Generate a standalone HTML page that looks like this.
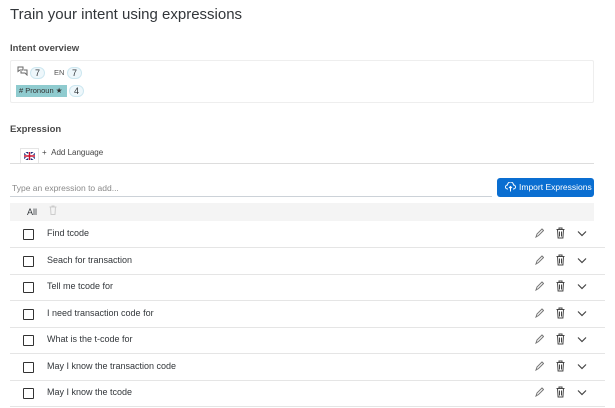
<!DOCTYPE html>
<html><head><style>
*{margin:0;padding:0;box-sizing:border-box}
body{width:615px;height:408px;background:#fff;font-family:"Liberation Sans",sans-serif;color:#32363a;position:relative;overflow:hidden}
.a{position:absolute}
.pill{position:absolute;height:12px;border:1px solid #cde7f0;background:#eef7fb;border-radius:7px;font-size:9px;line-height:10px;text-align:center;color:#32363a}
.row{position:absolute;left:10px;width:595px;height:27px;border-bottom:1px solid #e5e5e5}
.cb{position:absolute;left:13px;top:8px;width:11px;height:11px;border:1.3px solid #333;border-radius:1px}
.tx{position:absolute;left:37px;top:7px;font-size:9px;color:#32363a}
.ic{position:absolute;top:6px}
</style></head><body>
<div class="a" style="left:10px;top:6px;font-size:15px;color:#32363a">Train your intent using expressions</div>
<div class="a" style="left:10px;top:43px;font-size:9.5px;font-weight:bold;color:#4a4a4a">Intent overview</div>
<div class="a" style="left:10px;top:60px;width:584px;height:43px;border:1px solid #eee;border-radius:2px"></div>
<svg class="a" style="left:17px;top:66px" width="11" height="10" viewBox="0 0 11 10" fill="none" stroke="#666" stroke-width="1"><path d="M1 1h5v3H3l-2 1.5z"/><path d="M4 5v2h4l2 2V4H7"/></svg>
<div class="pill" style="left:30px;top:67px;width:15px">7</div>
<div class="a" style="left:54px;top:68px;font-size:7.5px;color:#555">EN</div>
<div class="pill" style="left:67px;top:67px;width:15px">7</div>
<div class="a" style="left:16px;top:85px;width:51px;height:12px;background:#8fcbcf;font-size:7.5px;line-height:12px;padding-left:3px;color:#333"># Pronoun ★</div>
<div class="pill" style="left:69px;top:85px;width:15px">4</div>
<div class="a" style="left:10px;top:124px;font-size:9.5px;font-weight:bold;color:#4a4a4a">Expression</div>
<div class="a" style="left:20px;top:148px;width:19px;height:15px;border:1px solid #e5e5e5;border-bottom:none;background:#fff"></div>
<svg class="a" style="left:24px;top:152px" width="11" height="8" viewBox="0 0 11 8"><rect width="11" height="8" fill="#1a2a7a"/><path d="M0 0L11 8M11 0L0 8" stroke="#fff" stroke-width="1.6"/><path d="M5.5 0v8M0 4h11" stroke="#fff" stroke-width="2.6"/><path d="M5.5 0v8M0 4h11" stroke="#c8102e" stroke-width="1.4"/></svg>
<div class="a" style="left:42px;top:148px;font-size:8px;color:#444">+ &nbsp;Add Language</div>
<div class="a" style="left:10px;top:163px;width:584px;height:1px;background:#ddd"></div>
<div class="a" style="left:12px;top:183px;font-size:8.5px;color:#8a8a8a">Type an expression to add...</div>
<div class="a" style="left:10px;top:196px;width:482px;height:1px;background:#ccd2d8"></div>
<div class="a" style="left:497px;top:178px;width:97px;height:19px;background:#0a6ed1;border-radius:3px;color:#fff;font-size:8.5px;line-height:19px;padding-left:22px">Import Expressions</div>
<svg class="a" style="left:505px;top:182px" width="11" height="10" viewBox="0 0 11 10" fill="none" stroke="#fff" stroke-width="1"><path d="M3 7H2.5A2 2 0 0 1 2.5 3 3 3 0 0 1 8.5 3 2 2 0 0 1 8.5 7H8"/><path d="M5.5 9.5V4.5M4 6l1.5-1.5L7 6"/></svg>
<div class="a" style="left:10px;top:203px;width:584px;height:18px;background:#f4f4f4"></div>
<div class="a" style="left:27px;top:207px;font-size:9px;color:#32363a">All</div>
<svg class="a" style="left:49px;top:205px" width="8" height="10" viewBox="0 0 8 10" fill="none" stroke="#ccc" stroke-width="1"><path d="M0.5 2h7M3 2V1h2v1M1.5 2l.5 7.5h4l.5-7.5"/></svg>
<div id="rows"></div>
<script>
var t=["Find tcode","Seach for transaction","Tell me tcode for","I need transaction code for","What is the t-code for","May I know the transaction code","May I know the tcode"];
var h="";
t.forEach(function(s,i){var y=221+i*26.5;
h+='<div class="row" style="top:'+y+'px"><div class="cb"></div><div class="tx">'+s+'</div>'+
'<svg class="ic" style="left:524px" width="10" height="12" viewBox="0 0 10 12" fill="none" stroke="#777" stroke-width="1"><path d="M2 10l1-3 5-5 1.5 1.5-5 5z"/></svg>'+
'<svg class="ic" style="left:546px" width="9" height="12" viewBox="0 0 9 12" fill="none" stroke="#444" stroke-width="1"><path d="M0.5 2.5h8M3 2.5V1h3v1.5M1.5 2.5l.6 8.5h4.8l.6-8.5M3.5 4.5v5M5.5 4.5v5"/></svg>'+
'<svg class="ic" style="left:567px;top:9px" width="10" height="7" viewBox="0 0 10 7" fill="none" stroke="#444" stroke-width="1.2"><path d="M1 1.5l4 4 4-4"/></svg></div>';});
document.getElementById("rows").innerHTML=h;
</script>
</body></html>
